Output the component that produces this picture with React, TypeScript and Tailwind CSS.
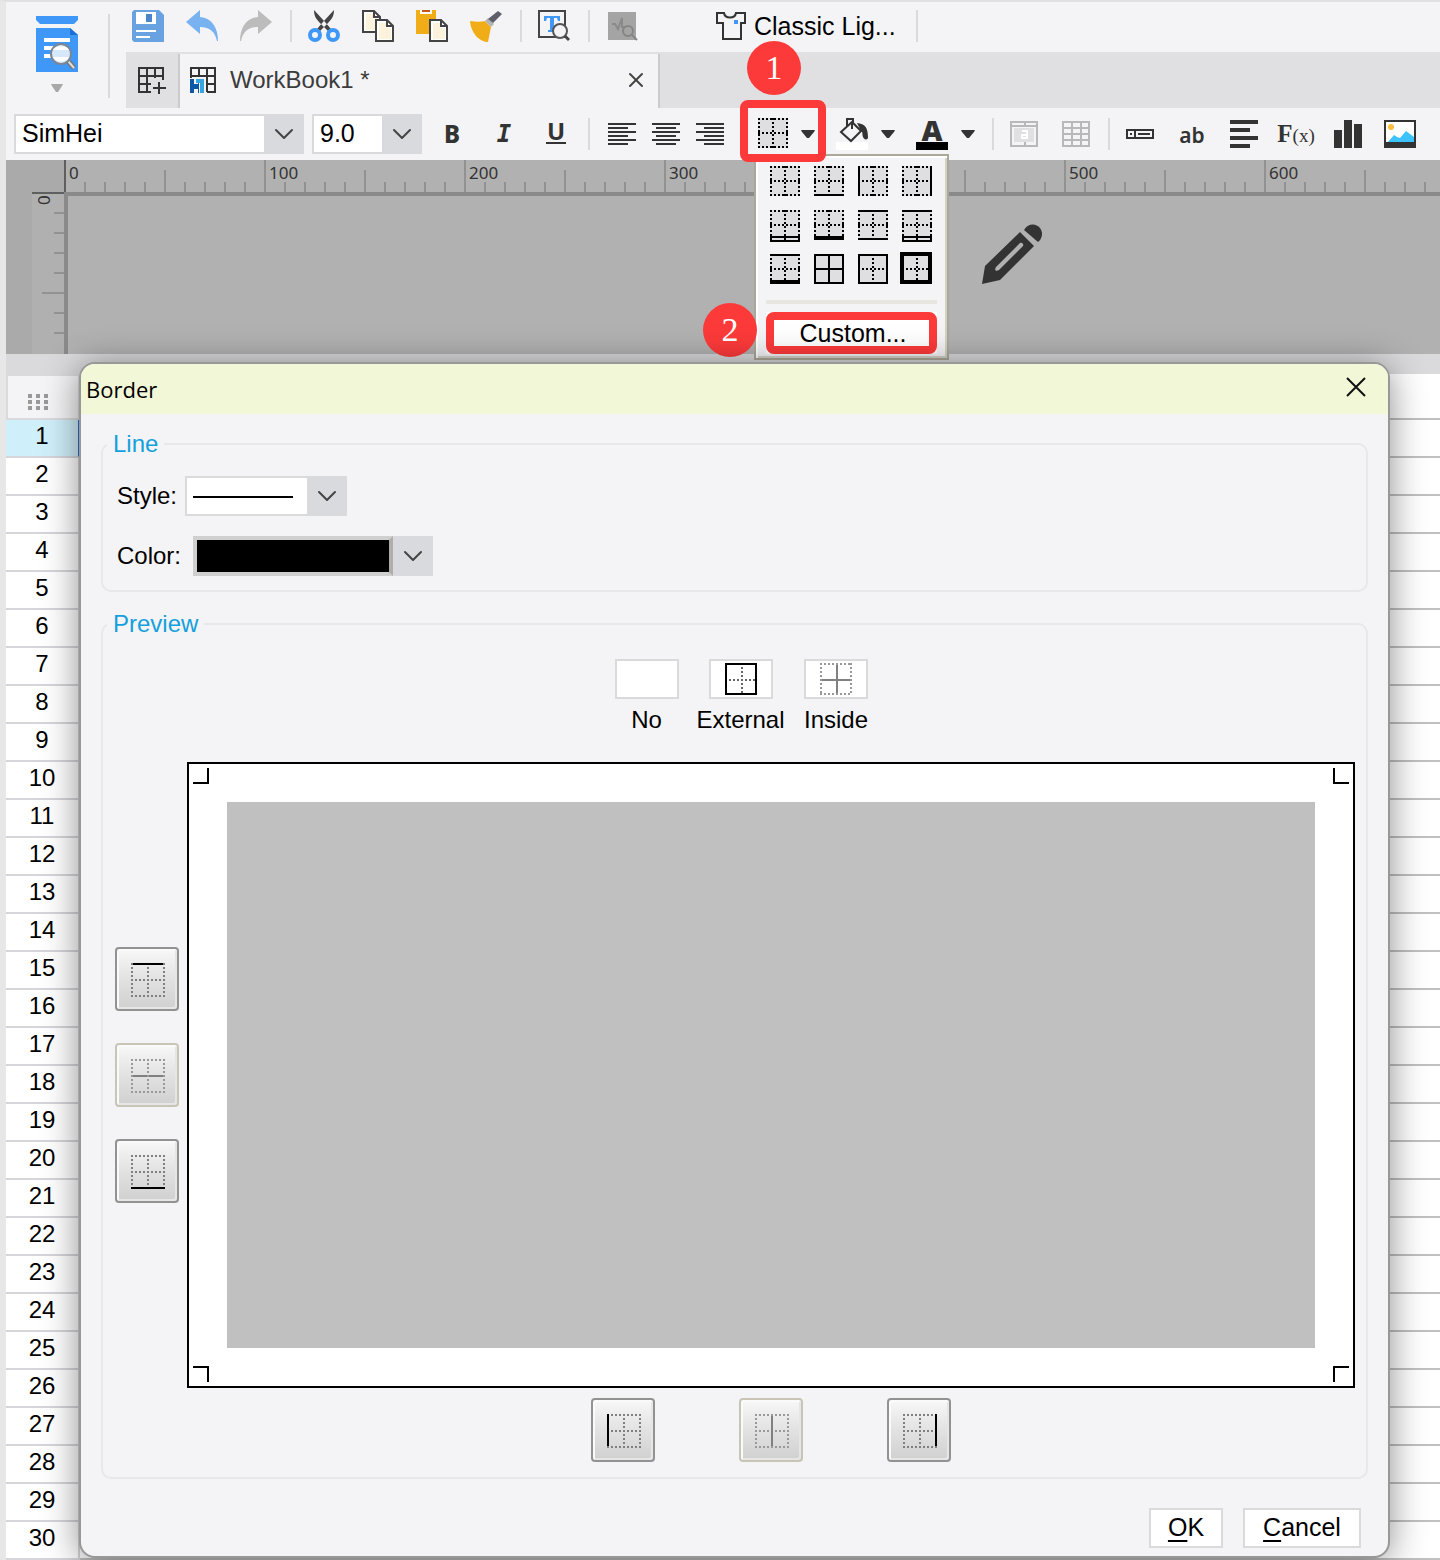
import type { ReactNode } from 'react'
import { ChevronDown, X } from 'lucide-react'

const ROWS = Array.from({ length: 30 }, (_, i) => i + 1)
const COLS = Array.from({ length: 12 }, (_, i) => i)
const H_TICKS = Array.from({ length: 70 }, (_, i) => i)
const V_TICKS = Array.from({ length: 7 }, (_, i) => i)

type Edge = 'solid' | 'double' | 'thick'

type GlyphProps = {
  n: number
  fill?: string
  dots?: string
  top?: Edge
  right?: Edge
  bottom?: Edge
  left?: Edge
  h?: string
  v?: string
  box?: boolean
}

// n is the icon's width in 2px units
function BorderGlyph({ n, fill = 'none', dots = '#000', top, right, bottom, left, h, v, box }: GlyphProps) {
  const mid = Math.floor(n / 2) + 0.5
  const end = n - 0.5
  const dash = (solid?: string | boolean) => (solid ? undefined : '1 1')
  const color = (edge?: Edge) => (edge ? '#000' : dots)
  const hasLowBottom = bottom === 'double' || bottom === 'thick'
  return (
    <svg width={n * 2} height={n * 2} viewBox={`0 0 ${n} ${n}`} shapeRendering="crispEdges" className="shrink-0 overflow-visible" aria-hidden="true">
      <rect width={n} height={n} fill={fill} />
      <line x1={0} x2={n} y1={mid} y2={mid} stroke={h ?? dots} strokeDasharray={dash(h)} />
      <line y1={0} y2={n} x1={mid} x2={mid} stroke={v ?? dots} strokeDasharray={dash(v)} />
      <line x1={0} x2={n} y1={0.5} y2={0.5} stroke={color(top)} strokeDasharray={dash(top)} />
      <line y1={0} y2={n} x1={0.5} x2={0.5} stroke={color(left)} strokeDasharray={dash(left)} />
      <line y1={0} y2={n} x1={end} x2={end} stroke={color(right)} strokeDasharray={dash(right)} />
      {!hasLowBottom && <line x1={0} x2={n} y1={end} y2={end} stroke={color(bottom)} strokeDasharray={dash(bottom)} />}
      {bottom === 'double' && <path d={`M0 ${n - 1.5}H${n}M0 ${n + 0.5}H${n}`} stroke="#000" />}
      {bottom === 'thick' && <path d={`M0 ${n - 1}H${n}`} stroke="#000" strokeWidth={2} />}
      {box && <rect x={0} y={0} width={n - 1} height={n - 1} fill="none" stroke="#000" strokeWidth={2} />}
    </svg>
  )
}

const presets: { label: string; glyph: Omit<GlyphProps, 'n'> }[] = [
  { label: 'No border', glyph: {} },
  { label: 'Bottom border', glyph: { bottom: 'solid' } },
  { label: 'Left border', glyph: { left: 'solid' } },
  { label: 'Right border', glyph: { right: 'solid' } },
  { label: 'Double bottom border', glyph: { bottom: 'double' } },
  { label: 'Thick bottom border', glyph: { bottom: 'thick' } },
  { label: 'Top and bottom border', glyph: { top: 'solid', bottom: 'solid' } },
  { label: 'Top and double bottom border', glyph: { top: 'solid', bottom: 'double' } },
  { label: 'Top and thick bottom border', glyph: { top: 'solid', bottom: 'thick' } },
  { label: 'All borders', glyph: { top: 'solid', right: 'solid', bottom: 'solid', left: 'solid', h: '#000', v: '#000' } },
  { label: 'Outside border', glyph: { top: 'solid', right: 'solid', bottom: 'solid', left: 'solid' } },
  { label: 'Thick outside border', glyph: { box: true } },
]

function Sep({ className = '' }: { className?: string }) {
  return <span className={`h-8 w-[2px] shrink-0 bg-[#dadadc] ${className}`} />
}

function Tool({ label, children, className = '' }: { label: string; children: ReactNode; className?: string }) {
  return (
    <button type="button" aria-label={label} className={`flex size-8 shrink-0 items-center justify-center text-[#333] ${className}`}>
      {children}
    </button>
  )
}

function Caret({ label }: { label: string }) {
  return (
    <button type="button" aria-label={label} className="ml-[13px] flex h-8 w-[14px] shrink-0 items-center">
      <svg width="14" height="8" viewBox="0 0 14 8" fill="#333"><path d="M0 0h14l-1 2-5 6H6L1 2z" /></svg>
    </button>
  )
}

function Arrow() {
  return (
    <span className="pointer-events-none absolute inset-y-0 right-0 flex w-10 items-center justify-center bg-[#d9dadd]">
      <ChevronDown size={32} strokeWidth={2} className="text-[#444]" absoluteStrokeWidth />
    </span>
  )
}

function Combo({ label, value, className }: { label: string; value: string; className: string }) {
  return (
    <div className={`relative h-10 shrink-0 ${className}`}>
      <select aria-label={label} className="size-full appearance-none border-2 border-[#dadadc] bg-white pb-[2px] pl-[6px] text-[25px] leading-8 text-black">
        <option>{value}</option>
      </select>
      <Arrow />
    </div>
  )
}

function LinesIcon({ align }: { align: 'left' | 'center' | 'right' }) {
  const x = { left: 0, center: 4, right: 8 }[align]
  return (
    <svg width="28" height="22" viewBox="0 0 28 22" shapeRendering="crispEdges" stroke="#333" strokeWidth="2">
      <path d="M0 1h28M0 9h28M0 17h28" />
      <path d={`M${x} 5h20M${x} 13h20M${x} 21h20`} />
    </svg>
  )
}

function PageShape({ x, y }: { x: number; y: number }) {
  return (
    <g transform={`translate(${x} ${y})`}>
      <path d="M1 1h11l6 6v15H1z" fill="#fff" stroke="#444" strokeWidth="2" />
      <path d="M4 4h7v5h5v11H4z" fill="#fdf3dc" />
      <path d="M12 1v6h6" fill="none" stroke="#444" strokeWidth="2" />
    </g>
  )
}

function QuickTools() {
  return (
    <div className="flex h-[50px] items-start pt-2 pl-[6px]">
      <Tool label="Save">
        <svg width="32" height="32" viewBox="0 0 32 32">
          <path d="M2 0h25l5 5v27H2l-2-2V2z" fill="#68a2e0" />
          <path d="M4 2h20v12H4z" fill="#fff" />
          <path d="M14 4h6v8h-6z" fill="#4a86c8" />
          <path d="M4 20h20v2H4zM4 26h14v2H4z" fill="#fff" />
        </svg>
      </Tool>
      <Tool label="Undo" className="ml-[22px]">
        <svg width="32" height="32" viewBox="0 0 32 32"><path d="M0 12 14 0v7c12 1 18 11 18 24h-1C29 22 24 17 14 17v7z" fill="#78b2f0" /></svg>
      </Tool>
      <Tool label="Redo" className="ml-[22px]">
        <svg width="32" height="32" viewBox="0 0 32 32"><path d="M32 12 18 0v7C6 8 0 18 0 31h1c2-9 7-14 17-14v7z" fill="#bcbcbc" /></svg>
      </Tool>
      <Sep className="mr-4 ml-[18px]" />
      <Tool label="Cut">
        <svg width="32" height="32" viewBox="0 0 32 32">
          <path d="M6 0c0 6 2 9 7 14l7 7 3-2-6-7zM26 0c0 6-2 9-7 14l-7 7-3-2 6-7z" fill="#444" />
          <circle cx="7" cy="25" r="5" fill="none" stroke="#3f98f8" strokeWidth="4" />
          <circle cx="25" cy="25" r="5" fill="none" stroke="#3f98f8" strokeWidth="4" />
        </svg>
      </Tool>
      <Tool label="Copy" className="ml-[22px]">
        <svg width="32" height="32" viewBox="0 0 32 32"><PageShape x={0} y={0} /><PageShape x={13} y={9} /></svg>
      </Tool>
      <Tool label="Paste" className="ml-[22px]">
        <svg width="32" height="32" viewBox="0 0 32 32">
          <path d="M0 0h20v24H0z" fill="#f0ad18" />
          <path d="M4 0h12v4H4z" fill="#fff" />
          <path d="M6 0h8v2H6z" fill="#c8561b" />
          <PageShape x={13} y={9} />
        </svg>
      </Tool>
      <Tool label="Format painter" className="ml-[22px]">
        <svg width="32" height="32" viewBox="0 0 32 32">
          <path d="M0 11c6 1 11 1 15 0l6 6c-1 5-2 10-3 15-8 0-17-8-18-21z" fill="#f0ad18" />
          <path d="m15 11 3-3 6 6-3 3z" fill="#b4b4b8" />
          <path d="M18 9 28 1l4 3-9 9z" fill="#5f5f6b" />
        </svg>
      </Tool>
      <Sep className="mr-4 ml-[18px]" />
      <Tool label="Find text">
        <svg width="32" height="32" viewBox="0 0 32 32">
          <path d="M1 1h26v26H1z" fill="none" stroke="#444" strokeWidth="2" />
          <path d="M6 6h16v5h-2l-1-3h-3v12h2v2h-8v-2h2V8H9l-1 3H6z" fill="#3f98f8" />
          <circle cx="22" cy="21" r="7" fill="#f4f4f6" stroke="#555" strokeWidth="2" />
          <path d="m27 26 4 4" stroke="#444" strokeWidth="3" />
        </svg>
      </Tool>
      <Sep className="mr-4 ml-[18px]" />
      <Tool label="Data check">
        <svg width="32" height="32" viewBox="0 0 32 32" fill="none">
          <path d="M2 2h28v28H2z" fill="#a4a4a4" />
          <path d="M6 14h3l3 5 4-11v9h4" stroke="#8a8a8a" strokeWidth="2" />
          <circle cx="22" cy="21" r="5" stroke="#858585" strokeWidth="2" />
          <path d="m26 25 5 5" stroke="#858585" strokeWidth="2" />
        </svg>
      </Tool>
      <button type="button" className="ml-[76px] flex h-8 shrink-0 items-center gap-2 text-[25px] leading-8 whitespace-nowrap text-black">
        <svg width="32" height="32" viewBox="0 0 32 32">
          <path d="M3 3h7c1 6 11 6 12 0h9v10h-4v16H9V13H3z" fill="none" stroke="#333" strokeWidth="2" />
          <path d="M20 10h4v4h-4z" fill="#3f98f8" />
        </svg>
        Classic Lig...
      </button>
      <Sep className="ml-5" />
    </div>
  )
}

function TabBar() {
  return (
    <div className="flex h-14 border-t-2 border-[#e0e0e2] bg-[#e0e0e2]">
      <button type="button" aria-label="New workbook" className="w-[54px] shrink-0 border-r-2 border-[#cbcbcd] pl-3">
        <svg width="28" height="28" viewBox="0 0 28 28" fill="none" stroke="#333" strokeWidth="2" shapeRendering="crispEdges">
          <path d="M13 25H1V1h24v12M1 9h24M1 17h12M9 1v24M17 1v10M21 15v12M15 21h13" />
        </svg>
      </button>
      <div className="flex w-[480px] shrink-0 items-center border-r-2 border-[#cbcbcd] bg-[#f4f4f6] pr-[14px] pb-[2px] pl-[10px]">
        <svg width="26" height="26" viewBox="0 0 26 26" shapeRendering="crispEdges">
          <path d="M1 11V1h24v24h-8M1 9h24M17 17h8M9 1v8M17 1v24" fill="none" stroke="#333" strokeWidth="2" />
          <path d="M0 12h4v5h4v-5h1v14H8v-4H4v4H0z" fill="#0c57a6" />
          <path d="M6 12h8v14h-4V16H6z" fill="#36a5e0" />
        </svg>
        <span className="ml-[14px] text-2xl leading-8 text-[#3c3c3c]">WorkBook1 *</span>
        <button type="button" aria-label="Close tab" className="ml-auto">
          <X size={24} strokeWidth={2} className="-mr-1 text-[#444]" />
        </button>
      </div>
    </div>
  )
}

function BorderMenu() {
  return (
    <div className="absolute top-full left-0 z-10 w-[195px] border-2 border-[#aca899] bg-[#f4f4f6] px-[10px] pt-[10px] pb-1 shadow-[inset_2px_2px_0_#fff,inset_-2px_-2px_0_#d2d2c8]">
      <div className="grid grid-cols-[repeat(4,30px)] gap-[14px] px-1">
        {presets.map(p => (
          <button key={p.label} type="button" aria-label={p.label} className="size-[30px]">
            <BorderGlyph n={15} fill="#dfdfe1" {...p.glyph} />
          </button>
        ))}
      </div>
      <hr className="mt-4 border-t-4 border-[#e7e6e0]" />
      <div className="relative mt-2">
        <button type="button" className="h-[42px] w-full bg-white pl-[3px] text-[25px] leading-8 text-black">Custom...</button>
        <span className="pointer-events-none absolute inset-0 rounded-lg border-8 border-[#fd3a3a]" />
        <Badge className="-top-[9px] right-[180px]">2</Badge>
      </div>
    </div>
  )
}

function Badge({ children, className }: { children: ReactNode; className: string }) {
  return (
    <span className={`absolute z-30 flex size-[54px] items-center justify-center rounded-full bg-[#fd3a3a] font-['Liberation_Serif',serif] text-[34px] leading-none text-white ${className}`}>
      {children}
    </span>
  )
}

function FormatBar() {
  return (
    <div className="flex h-[52px] items-center overflow-visible pl-2">
      <Combo label="Font" value="SimHei" className="w-[290px]" />
      <Combo label="Font size" value="9.0" className="ml-2 w-[110px]" />
      <Tool label="Bold" className="ml-[14px] font-['Noto_Sans',sans-serif] text-2xl leading-8 font-extrabold">B</Tool>
      <Tool label="Italic" className="ml-5 font-['DejaVu_Sans_Mono',monospace] text-2xl leading-8 font-bold italic">I</Tool>
      <Tool label="Underline" className="ml-5 pb-1">
        <span className="border-b-2 border-[#333] px-[1px] font-['Noto_Sans',sans-serif] text-2xl leading-[22px] font-bold">U</span>
      </Tool>
      <Sep className="mx-4" />
      <Tool label="Align left"><LinesIcon align="left" /></Tool>
      <Tool label="Align center" className="ml-3"><LinesIcon align="center" /></Tool>
      <Tool label="Align right" className="ml-3"><LinesIcon align="right" /></Tool>
      <Sep className="mr-[10px] ml-4" />
      <div className="relative flex h-10 shrink-0 items-center pl-1">
        <button type="button" aria-label="Borders" className="flex h-8 items-start"><BorderGlyph n={15} fill="#dfdfe1" /></button>
        <Caret label="More borders" />
        <BorderMenu />
        <span className="pointer-events-none absolute -top-[14px] -left-[14px] z-20 h-[62px] w-[86px] rounded-lg border-8 border-[#fd3a3a]" />
        <Badge className="-top-[73px] -left-[7px]">1</Badge>
      </div>
      <Tool label="Fill color" className="ml-[21px]">
        <svg width="32" height="32" viewBox="0 0 32 32" fill="none">
          <path d="M0 24h32v8H0z" fill="#fff" />
          <path d="M11 8V1h6v4M16 4v7M16 4 5 14l10 9 10-10z" stroke="#333" strokeWidth="2" />
          <path d="M21 5c8 1 11 4 11 15-2 3-4 1-5-1-1-3 0-5-2-6z" fill="#333" />
        </svg>
      </Tool>
      <Caret label="More fill colors" />
      <Tool label="Font color" className="ml-[21px] flex-col">
        <span className="font-['Open_Sans',sans-serif] text-[29px] leading-6 font-extrabold">A</span>
        <span className="h-2 w-8 bg-black" />
      </Tool>
      <Caret label="More font colors" />
      <Sep className="mr-[14px] ml-[17px]" />
      <Tool label="Merge cells">
        <svg width="28" height="26" viewBox="0 0 28 26" fill="none" stroke="#b8b8ba" strokeWidth="2" shapeRendering="crispEdges">
          <path d="M1 1h26v24H1zM1 5h26M15 1v4M15 21v4" />
          <path d="M4 7h20v14H4z" fill="#e0e0e2" stroke="none" />
          <path d="M12 10h5v7h-5v-3h5" stroke="#fff" />
        </svg>
      </Tool>
      <Tool label="Split cells" className="ml-5">
        <svg width="28" height="26" viewBox="0 0 28 26" fill="none" stroke="#b8b8ba" strokeWidth="2" shapeRendering="crispEdges">
          <path d="M1 1h26v24H1zM1 7h26M1 13h26M1 19h26M10 1v24M19 1v24" />
        </svg>
      </Tool>
      <Sep className="mr-[14px] ml-4" />
      <Tool label="Widget">
        <svg width="28" height="10" viewBox="0 0 28 10" fill="none" stroke="#333" strokeWidth="2" shapeRendering="crispEdges">
          <path d="M1 1h26v8H1zM9 1v8M12 5h12M4 5h2" />
        </svg>
      </Tool>
      <Tool label="Text" className="ml-5 pt-[2px] font-['Noto_Sans',sans-serif] text-[21px] leading-6 font-semibold">ab</Tool>
      <Tool label="Rich text" className="ml-5">
        <svg width="28" height="28" viewBox="0 0 28 28" shapeRendering="crispEdges" strokeWidth="4">
          <path d="M0 2h28M0 18h28M0 10h20M0 26h20" stroke="#333" />
        </svg>
      </Tool>
      <Tool label="Formula" className="ml-5 font-['Liberation_Serif',serif] text-[25px] font-bold">
        F<span className="pt-1 text-[19px] font-normal">(x)</span>
      </Tool>
      <Tool label="Chart" className="ml-5">
        <svg width="28" height="28" viewBox="0 0 28 28" fill="#333"><path d="M0 10h8v18H0zM10 0h8v28h-8zM20 4h8v24h-8z" /></svg>
      </Tool>
      <Tool label="Image" className="ml-5">
        <svg width="32" height="28" viewBox="0 0 32 28">
          <path d="M0 0h32v28H0z" fill="#333" />
          <path d="M2 2h28v20H2z" fill="#fff" />
          <circle cx="7" cy="7" r="3" fill="#ffbe3c" />
          <path d="m4 22 6-7 3 2 3 1 6-7 8 6v5z" fill="#3cc3fb" />
        </svg>
      </Tool>
    </div>
  )
}

function Ruler() {
  return (
    <div className="relative flex h-[194px] bg-[#aaa]">
      <div className="flex w-[58px] shrink-0 flex-col pl-[26px]">
        <div className="h-8" />
        <div className="flex-1 border-t-2 border-[#5f5f5f] bg-[#b0b0b0] font-['Noto_Sans',sans-serif] text-[17px] text-[#333]">
          {V_TICKS.map(i => (
            <div key={i} className="flex h-5 flex-col items-end justify-end first:h-5">
              {i === 0 && <span className="mr-auto mb-auto ml-1 block h-3 w-4 -rotate-90 text-center leading-3">0</span>}
              <span className={`h-[2px] shrink-0 bg-[#929292] ${i % 10 === 4 ? 'w-[22px]' : 'w-[10px]'}`} />
            </div>
          ))}
        </div>
      </div>
      <div className="flex min-w-0 flex-1 flex-col">
        <div className="flex h-8 items-end overflow-hidden bg-[#b1b1b1] font-['Noto_Sans',sans-serif] text-[17px] leading-[26px] text-[#333]">
          {H_TICKS.map(i => (
            <div
              key={i}
              className={`w-5 shrink-0 border-l-2 ${i === 0 ? 'border-[#5f5f5f]' : 'border-[#929292]'} ${i % 10 === 0 ? 'h-8' : i % 5 === 0 ? 'h-[22px]' : 'h-[10px]'}`}
            >
              {i % 10 === 0 && <span className="block pl-[3px]">{i * 10}</span>}
            </div>
          ))}
        </div>
        <div className="relative flex-1 border-t-4 border-l-4 border-[#8a8a8a] bg-[#b1b1b1]">
          <svg width="60" height="60" viewBox="0 0 60 60" fill="#333" className="absolute top-7 left-[914px]">
            <path d="M42 6c4-7 12-7 16-2 3 4 3 10-2 14z" />
            <path fillRule="evenodd" d="M38 8 52 22 18 56 0 60 3 42zM38 19 14 43c-2 3 0 5 3 3l24-24c1-2-1-4-3-3z" />
          </svg>
        </div>
      </div>
    </div>
  )
}

function Sheet() {
  return (
    <div className="bg-white">
      <div className="h-5 bg-[#dadadc]" />
      <table className="w-full table-fixed border-separate border-spacing-0">
        <thead>
          <tr>
            <th className="h-[46px] w-[74px] border-2 border-[#dadadc] bg-[#f4f4f6] p-0">
              <span className="mt-[10px] ml-5 grid w-5 grid-cols-3 gap-x-1 gap-y-[2px]">
                {COLS.slice(0, 9).map(i => <span key={i} className="size-1 bg-[#999]" />)}
              </span>
            </th>
            <th colSpan={10} className="border-b-2 border-[#c0c0c0] p-0" />
          </tr>
        </thead>
        <tbody>
          {ROWS.map(row => (
            <tr key={row}>
              <th scope="row" className={`h-[38px] border-r-2 border-b-2 border-[#d6d6da] p-0 pb-1 text-center text-2xl leading-8 font-normal text-black ${row === 1 ? 'border-r-[#2a6fd6] bg-[#cfeffa]' : 'bg-white'}`}>
                {row}
              </th>
              {COLS.slice(0, 10).map(i => <td key={i} className="border-r-2 border-b-2 border-[#c0c0c0] last:border-r-0" />)}
            </tr>
          ))}
        </tbody>
      </table>
    </div>
  )
}

function EdgeButton({ label, disabled, glyph }: { label: string; disabled?: boolean; glyph: Omit<GlyphProps, 'n'> }) {
  return (
    <button
      type="button"
      aria-label={label}
      disabled={disabled}
      className={`flex size-16 items-start rounded border-2 bg-linear-to-b from-[#f8f8f8] from-0% via-[#e2e2e2] via-50% to-[#d0d0d0] p-[14px] shadow-[inset_2px_2px_0_#fafafa,inset_-2px_-2px_0_#e6e6e6] ${disabled ? 'border-[#c9c5b6]' : 'border-[#929292]'}`}
    >
      <BorderGlyph n={17} dots={disabled ? '#999' : '#808080'} {...glyph} />
    </button>
  )
}

function PresetButton({ label, width, children }: { label: string; width: string; children?: ReactNode }) {
  return (
    <label className={`flex flex-col items-center gap-[7px] ${width}`}>
      <button type="button" aria-label={label} className="flex h-10 w-16 items-center justify-center border-2 border-[#dadadc] bg-white">
        {children}
      </button>
      <span className="text-2xl leading-7">{label}</span>
    </label>
  )
}

function BorderDialog() {
  return (
    <div role="dialog" aria-labelledby="border-title" className="absolute top-[362px] right-[50px] left-[79px] z-20 overflow-hidden rounded-2xl border-2 border-[#989898] bg-[#f4f4f6] text-black shadow-[0_4px_36px_rgba(0,0,0,0.45)]">
      <header className="flex h-[50px] items-center justify-between bg-[#f1f7d7] pr-[21px] pl-[5px]">
        <h2 id="border-title" className="font-['Open_Sans',sans-serif] text-[22px] leading-8">Border</h2>
        <button type="button" aria-label="Close" className="pb-1">
          <svg width="22" height="22" viewBox="0 0 22 22" stroke="#111" strokeWidth="2"><path d="m2 2 18 18M20 2 2 20" /></svg>
        </button>
      </header>

      <div className="flex flex-col px-5 pt-4 pb-2">
        <fieldset className="flex flex-col gap-5 rounded-[10px] border-2 border-[#e8e8ea] pt-[18px] pb-[14px] pl-[14px]">
          <legend className="-ml-[10px] px-[6px] text-2xl leading-7 text-[#14a0dc]">Line</legend>
          <div className="flex items-center gap-2">
            <label htmlFor="line-style" className="text-2xl leading-8">Style:</label>
            <div className="relative h-10 w-[162px]">
              <select id="line-style" className="size-full appearance-none border-2 border-[#dadadc] bg-white">
                <option value="solid" aria-label="Solid" />
              </select>
              <span className="pointer-events-none absolute top-5 left-2 h-[2px] w-[100px] bg-black" />
              <Arrow />
            </div>
          </div>
          <div className="flex items-center gap-3">
            <label htmlFor="line-color" className="text-2xl leading-8">Color:</label>
            <div className="relative h-10 w-60">
              <select id="line-color" className="h-full w-[200px] appearance-none border-4 border-[#cfcfcf] border-r-[#b0aeaa] bg-black">
                <option value="#000000" aria-label="Black" />
              </select>
              <Arrow />
            </div>
          </div>
        </fieldset>

        <fieldset className="mt-[18px] rounded-[10px] border-2 border-[#e8e8ea] pt-[21px] pr-[11px] pb-[15px] pl-3">
          <legend className="-ml-2 px-[6px] text-2xl leading-7 text-[#14a0dc]">Preview</legend>
          <div className="flex justify-center gap-[18px] pl-[14px]">
            <PresetButton label="No" width="w-16" />
            <PresetButton label="External" width="w-[88px]">
              <BorderGlyph n={16} dots="#666" top="solid" right="solid" bottom="solid" left="solid" />
            </PresetButton>
            <PresetButton label="Inside" width="w-[67px]">
              <BorderGlyph n={16} dots="#999" h="#808080" v="#808080" />
            </PresetButton>
          </div>

          <div className="mt-7 grid grid-cols-[64px_1fr] items-center gap-x-2 gap-y-[10px]">
            <div className="flex flex-col gap-8">
              <EdgeButton label="Top" glyph={{ top: 'solid' }} />
              <EdgeButton label="Horizontal" disabled glyph={{ h: '#808080' }} />
              <EdgeButton label="Bottom" glyph={{ bottom: 'solid' }} />
            </div>
            <div className="relative border-2 border-black bg-white p-[38px]">
              <span className="absolute top-1 left-1 size-4 border-r-2 border-b-2 border-black" />
              <span className="absolute top-1 right-1 size-4 border-b-2 border-l-2 border-black" />
              <span className="absolute bottom-1 left-1 size-4 border-t-2 border-r-2 border-black" />
              <span className="absolute right-1 bottom-1 size-4 border-t-2 border-l-2 border-black" />
              <div className="h-[546px] bg-[#c0c0c0]" />
            </div>
            <div className="col-start-2 flex justify-center gap-[84px]">
              <EdgeButton label="Left" glyph={{ left: 'solid' }} />
              <EdgeButton label="Vertical" disabled glyph={{ v: '#808080' }} />
              <EdgeButton label="Right" glyph={{ right: 'solid' }} />
            </div>
          </div>
        </fieldset>

        <footer className="mt-[29px] flex justify-end gap-5 pr-[7px] text-[25px] leading-8">
          <button type="button" className="h-10 w-[74px] border-2 border-[#dadadc] bg-white pb-[2px]"><u className="underline-offset-4">O</u>K</button>
          <button type="button" className="h-10 w-[118px] border-2 border-[#dadadc] bg-white pb-[2px]"><u className="underline-offset-4">C</u>ancel</button>
        </footer>
      </div>
    </div>
  )
}

export default function App() {
  return (
    <div className="relative overflow-hidden border-t-2 border-l-[6px] border-t-[#e0e0e2] border-l-[#e7e7e7] bg-[#f4f4f6] font-['Liberation_Sans',Arial,sans-serif]">
      {/* the dialog is placed from the window's edge, so undo the frame's own border */}
      <div className="absolute -top-[2px] right-0 -left-[6px] z-20"><BorderDialog /></div>
      <div className="flex h-[106px]">
        <button type="button" aria-label="Preview" className="flex w-[102px] shrink-0 flex-col items-center gap-3 pt-[14px]">
          <svg width="42" height="56" viewBox="0 0 42 56">
            <path d="M0 0h42v4l-4 4H4L0 4z" fill="#3f98f8" />
            <path d="M0 12h34l8 7v37H0z" fill="#3f98f8" />
            <path d="M34 12v7h8z" fill="#1d71d6" />
            <path d="M8 22h26v4H8zM8 30h10v4H8zM8 38h10v4H8z" fill="#fff" />
            <path d="m31 44 7 8" stroke="#777" strokeWidth="5" />
            <path d="m32 45 6 7" stroke="#ddd" strokeWidth="2" />
            <circle cx="25" cy="38" r="10" fill="#d6e8fc" stroke="#7c8694" strokeWidth="2" />
            <path d="M17 34c2-5 14-5 16 0zM17 41h16c-2 6-14 6-16 0z" fill="#fff" />
          </svg>
          <svg width="12" height="8" viewBox="0 0 12 8" fill="#a8a8a8"><path d="M0 0h12l-1 2-4 6H5L1 2z" /></svg>
        </button>
        <span className="mt-3 h-[84px] w-[2px] shrink-0 bg-[#dadadc]" />
        <div className="min-w-0 flex-1 pl-4">
          <QuickTools />
          <TabBar />
        </div>
      </div>
      <FormatBar />
      <Ruler />
      <Sheet />
    </div>
  )
}
